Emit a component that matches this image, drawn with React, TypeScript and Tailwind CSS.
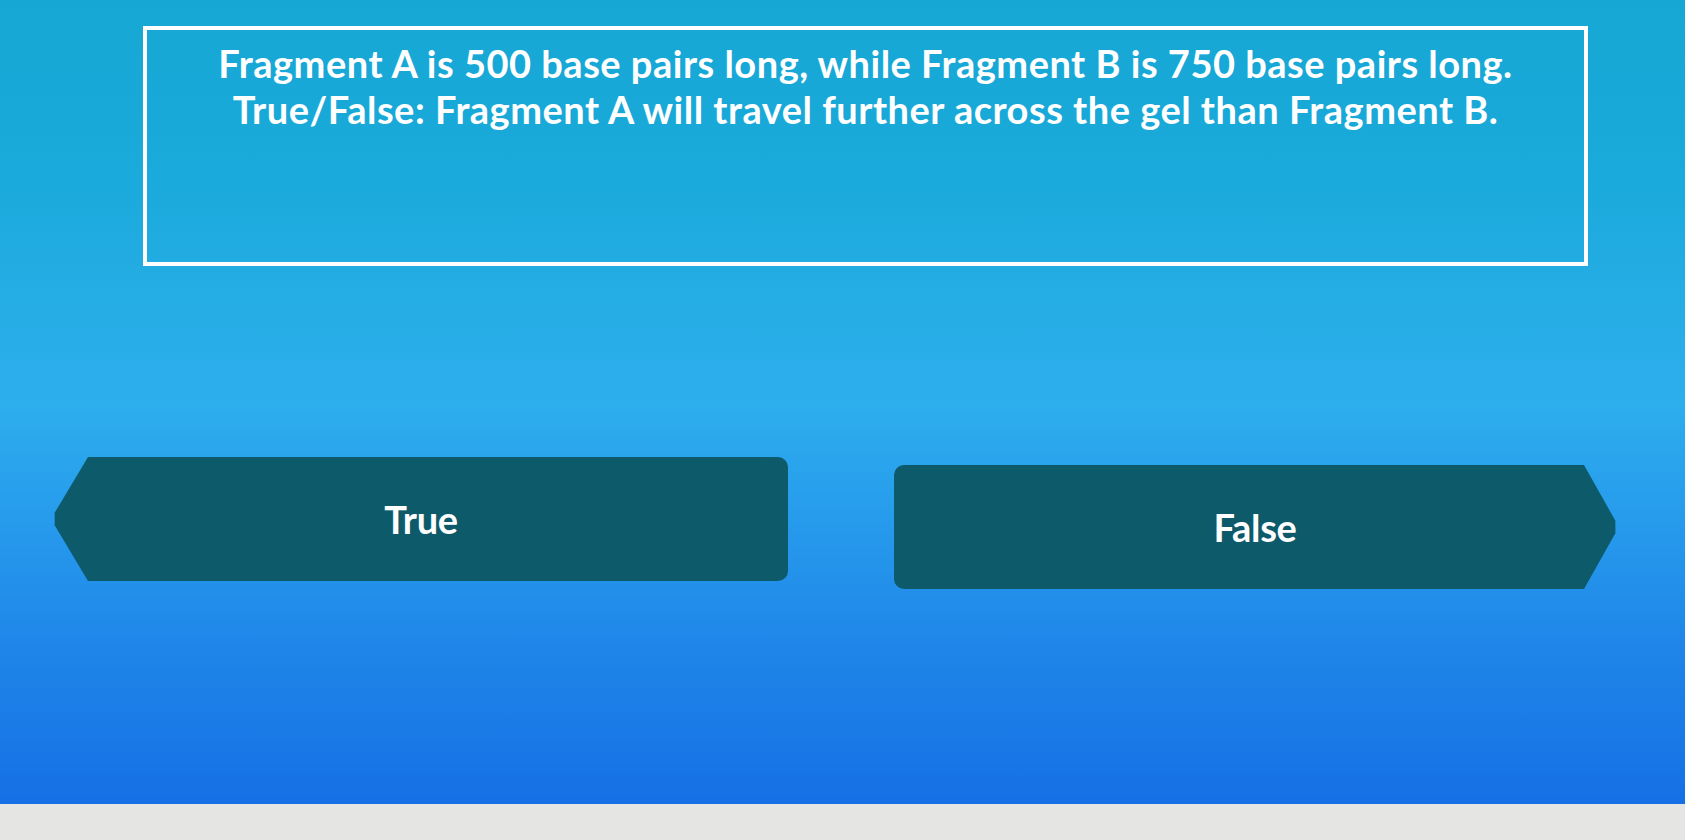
import React from "react";

const font = { fontFamily: "Lato, 'Open Sans', sans-serif" };

function ChoiceButton({ label, side }: { label: string; side: "left" | "right" }) {
  const arrow =
    side === "left" ? (
      <div className="w-[34px] h-full bg-[#0d5a6b] [clip-path:polygon(100%_0,2%_45%,2%_55%,100%_100%)]" />
    ) : (
      <div className="w-[32px] h-full bg-[#0d5a6b] [clip-path:polygon(0_0,98%_45%,98%_55%,0_100%)]" />
    );
  return (
    <div className="flex h-[124px]">
      {side === "left" && arrow}
      <div
        className={
          side === "left"
            ? "flex-1 h-full bg-[#0d5a6b] rounded-r-[10px] flex items-center justify-center pr-[34px]"
            : "flex-1 h-full bg-[#0d5a6b] rounded-l-[10px] flex items-center justify-center pl-[32px]"
        }
      >
        <span className="text-white font-bold text-[38px] leading-none tracking-[-0.3px]" style={font}>
          {label}
        </span>
      </div>
      {side === "right" && arrow}
    </div>
  );
}

export default function App() {
  return (
    <div className="w-full h-[840px] flex flex-col overflow-hidden" style={font}>
      <div className="flex-1 flex flex-col bg-[linear-gradient(180deg,#17a7d4_0%,#1aaadb_22%,#27ade6_40%,#2daeed_50%,#2699ec_66%,#1e84e8_82%,#1670e5_100%)]">
        {/* question card */}
        <div className="ml-[143px] mt-[26px] w-[1445px] h-[240px] border-[4px] border-white pt-[10px]">
          <p className="text-white font-bold text-[38px] leading-[46px] text-center tracking-[0.5px]">
            Fragment A is 500 base pairs long, while Fragment B is 750 base pairs long.
            <br />
            True/False: Fragment A will travel further across the gel than Fragment B.
          </p>
        </div>

        {/* answer choices */}
        <div className="flex items-start mt-[191px]">
          <div className="ml-[54px] w-[734px]">
            <ChoiceButton label="True" side="left" />
          </div>
          <div className="ml-[106px] w-[722px] mt-[8px]">
            <ChoiceButton label="False" side="right" />
          </div>
        </div>
      </div>
      <div className="h-[36px] bg-[#e5e5e3]" />
    </div>
  );
}
